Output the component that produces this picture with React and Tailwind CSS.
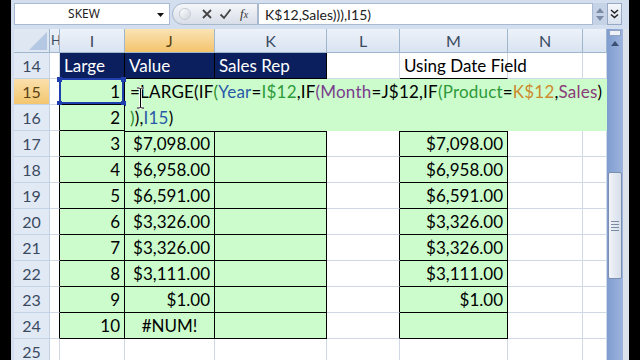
import React from "react";
import { twMerge } from "tailwind-merge";

const values = ["$7,098.00", "$6,958.00", "$6,591.00", "$3,326.00", "$3,326.00", "$3,111.00", "$1.00"];

const Cell = ({ className, children }) => (
  <div
    className={twMerge(
      "relative flex items-center whitespace-nowrap bg-white px-[4px] border-r border-b border-[#d0d7e5]",
      className
    )}
  >
    {children}
  </div>
);

const ColHead = ({ label, active, className }) => (
  <div
    className={twMerge(
      "flex items-center justify-center overflow-hidden text-[16px] text-[#3b4a60] border-r border-b border-[#9eb6ce] bg-linear-to-b from-[#edf2f9] to-[#d9e3f1]",
      active && "from-[#fae3b4] to-[#f3c46a] text-[#5a4214]",
      className
    )}
  >
    {label}
  </div>
);

const RowHead = ({ n, active }) => (
  <div
    className={twMerge(
      "flex items-center justify-center text-[16px] text-[#3b4a60] border-r border-b border-[#c3d2e4] bg-[#e1e9f5]",
      active && "bg-linear-to-b from-[#fae0ab] to-[#f3c66e] text-[#5a4214]"
    )}
  >
    {n}
  </div>
);

const Handle = ({ className }) => (
  <span className={twMerge("absolute h-[5px] w-[5px] bg-[#1f3fae]", className)} />
);

const Formula = () => (
  <div className="col-start-4 col-end-10 row-span-2 flex flex-col bg-[#ccfccc] pl-[5px] text-[17px] tracking-[0.2px] text-black">
    <div className="flex h-[26px] items-center whitespace-nowrap">
      <span>=LARGE(IF</span>
      <span className="text-[#2e8b2e]">(</span>
      <span className="text-[#2859a8]">Year</span>
      <span>=</span>
      <span className="text-[#2e9a3a]">I$12</span>
      <span>,IF</span>
      <span className="text-[#7a3c8c]">(</span>
      <span className="text-[#7a3c8c]">Month</span>
      <span>=J$12,IF</span>
      <span className="text-[#2e9a3a]">(</span>
      <span className="text-[#2e9a3a]">Product</span>
      <span>=</span>
      <span className="text-[#cc8a2c]">K$12</span>
      <span>,</span>
      <span className="text-[#8a3a78]">Sales</span>
      <span>)</span>
    </div>
    <div className="flex h-[26px] items-center whitespace-nowrap">
      <span className="text-[#2e8b2e]">)</span>
      <span>),</span>
      <span className="text-[#2859a8]">I15</span>
      <span>)</span>
    </div>
  </div>
);

export default function App() {
  const green = "bg-[#ccfccc] border-black";
  return (
    <div className="relative flex h-[360px] w-[640px] overflow-hidden bg-black font-['Lato',sans-serif]">
      <div className="w-[11px] shrink-0 bg-black" />
      <div className="flex w-[618px] shrink-0 flex-col bg-[#d3dfee]">
        {/* formula bar */}
        <div className="flex h-[29px] shrink-0 items-start pl-[3px] pt-[3px]">
          <div className="flex h-[22px] w-[156px] items-center border border-[#a7b9d3] bg-white">
            <span className="flex-1 text-center font-['Noto_Sans',sans-serif] text-[12px] text-[#222]">SKEW</span>
            <svg width="16" height="22" viewBox="0 0 16 22">
              <path d="M4 10h7l-3.5 4z" fill="#111" />
            </svg>
          </div>
          <div className="ml-[2px] flex h-[22px] w-[86px] items-center rounded-l-full border border-[#aab8cc] bg-linear-to-b from-[#f4f6f9] to-[#d8dee8]">
            <span className="ml-[6px] h-[12px] w-[12px] rounded-full border border-[#c5ccd6] bg-linear-to-br from-[#ffffff] to-[#cfd5de]" />
            <svg className="ml-[10px]" width="12" height="12" viewBox="0 0 12 12">
              <path d="M2 2l8 8M10 2l-8 8" stroke="#444" strokeWidth="1.8" />
            </svg>
            <svg className="ml-[6px]" width="13" height="12" viewBox="0 0 13 12">
              <path d="M1.5 6.5l3.5 3.5 6.5-8.5" stroke="#444" strokeWidth="1.8" fill="none" />
            </svg>
            <span className="ml-[8px] font-['Liberation_Serif',serif] text-[13px] italic text-[#333]">
              f<span className="text-[10px]">x</span>
            </span>
          </div>
          <div className="flex h-[22px] w-[335px] items-center border border-[#a7b9d3] bg-white pl-[6px] text-[14px] text-[#222]">
            K$12,Sales))),I15)
          </div>
          <div className="flex h-[22px] w-[14px] flex-col items-center justify-center gap-[3px] bg-[#c6d3e6]">
            <svg width="8" height="5" viewBox="0 0 8 5">
              <path d="M0 5L4 0l4 5z" fill="#7c8ba3" />
            </svg>
            <svg width="8" height="5" viewBox="0 0 8 5">
              <path d="M0 0l4 5 4-5z" fill="#7c8ba3" />
            </svg>
          </div>
          <div className="flex h-[22px] w-[15px] items-center justify-center border border-[#97a9c4] bg-linear-to-b from-[#f5f8fc] to-[#d9e2ef]">
            <svg width="9" height="10" viewBox="0 0 9 10">
              <path d="M1 1l3.5 3 3.5-3M1 5.5l3.5 3 3.5-3" stroke="#222" strokeWidth="1.5" fill="none" />
            </svg>
          </div>
        </div>

        {/* sheet + scrollbar */}
        <div className="flex min-h-0 flex-1 pl-[3px]">
          <div className="grid w-[593px] shrink-0 grid-cols-[36px_10px_65px_90px_112px_73px_108px_75px_24px] grid-rows-[24px_repeat(12,26px)] text-[17px] text-black">
            <div className="flex items-end justify-end border-r border-b border-[#9eb6ce] bg-[#dfe7f3] p-[2px]">
              <svg width="18" height="18" viewBox="0 0 18 18">
                <path d="M18 0v18H0z" fill="#b5c8e3" />
              </svg>
            </div>
            <ColHead label="H" className="justify-start pl-[1px] text-[13px]" />
            <ColHead label="I" />
            <ColHead label="J" active />
            <ColHead label="K" />
            <ColHead label="L" />
            <ColHead label="M" />
            <ColHead label="N" />
            <ColHead label="" />

            {/* row 14 */}
            <RowHead n="14" />
            <Cell />
            <Cell className="bg-[#0b1f5e] text-white border-black">Large</Cell>
            <Cell className="bg-[#0b1f5e] text-white border-black">Value</Cell>
            <Cell className="bg-[#0b1f5e] text-white border-black">Sales Rep</Cell>
            <Cell />
            <Cell className="z-10 border-b-black">Using Date Field</Cell>
            <Cell />
            <Cell />

            {/* row 15 */}
            <RowHead n="15" active />
            <Cell className="border-r-black" />
            <Cell className={twMerge("justify-end", green)}>
              1
              <span className="absolute -top-px -left-px right-0 bottom-0 border-2 border-[#1f3fae]" />
              <Handle className="-top-[2px] -left-[3px]" />
              <Handle className="-bottom-[2px] -left-[3px]" />
              <Handle className="-top-[2px] -right-[2px]" />
              <Handle className="-bottom-[2px] -right-[2px]" />
            </Cell>
            <Formula />

            {/* row 16 */}
            <RowHead n="16" />
            <Cell className="border-r-black" />
            <Cell className={twMerge("justify-end", green)}>2</Cell>

            {/* rows 17 - 24 */}
            {[...values, "#NUM!"].map((v, i) => {
              const first = i === 0;
              const last = i === 7;
              return (
                <React.Fragment key={i}>
                  <RowHead n={String(17 + i)} />
                  <Cell className="border-r-black" />
                  <Cell className={twMerge("justify-end", green)}>{i + 3}</Cell>
                  <Cell className={twMerge(last ? "justify-center" : "justify-end", green, first && "border-t")}>{v}</Cell>
                  <Cell className={twMerge(green, first && "border-t")} />
                  <Cell className="border-r-black" />
                  <Cell className={twMerge("justify-end", green, first && "border-t")}>{last ? "" : v}</Cell>
                  <Cell />
                  <Cell />
                </React.Fragment>
              );
            })}

            {/* row 25 */}
            <RowHead n="25" />
            <Cell />
            <Cell />
            <Cell />
            <Cell />
            <Cell />
            <Cell />
            <Cell />
            <Cell />
          </div>

          {/* vertical scrollbar */}
          <div className="flex w-[16px] shrink-0 flex-col bg-linear-to-r from-[#7f9dd0] to-[#9db4dc]">
            <div className="mx-[2px] mt-[1px] h-[6px] border border-[#8ea2c2] bg-[#eef2f8]" />
            <div className="flex h-[14px] items-center justify-center">
              <svg width="8" height="5" viewBox="0 0 8 5">
                <path d="M0 5L4 0l4 5z" fill="#3c4f72" />
              </svg>
            </div>
            <div className="h-[122px]" />
            <div className="mx-[1px] flex h-[107px] flex-col items-center justify-center gap-[2px] rounded-[2px] border border-[#7d8fb0] bg-linear-to-r from-[#f1f4f9] to-[#d6deea]">
              <span className="h-px w-[8px] bg-[#7d8aa3]" />
              <span className="h-px w-[8px] bg-[#7d8aa3]" />
              <span className="h-px w-[8px] bg-[#7d8aa3]" />
              <span className="h-px w-[8px] bg-[#7d8aa3]" />
            </div>
          </div>
          <div className="w-[6px] shrink-0 bg-[#dde3ea]" />
        </div>
      </div>
      <div className="w-[11px] shrink-0 bg-black" />

      {/* mouse I-beam cursor */}
      <svg className="absolute left-[136px] top-[87px]" width="9" height="22" viewBox="0 0 9 22">
        <path d="M1 1h2.5l1 1 1-1H8M4.5 2v18M1 21h2.5l1-1 1 1H8" stroke="#fff" strokeWidth="2.5" fill="none" />
        <path d="M1 1h2.5l1 1 1-1H8M4.5 2v18M1 21h2.5l1-1 1 1H8" stroke="#000" strokeWidth="1" fill="none" />
      </svg>
    </div>
  );
}
